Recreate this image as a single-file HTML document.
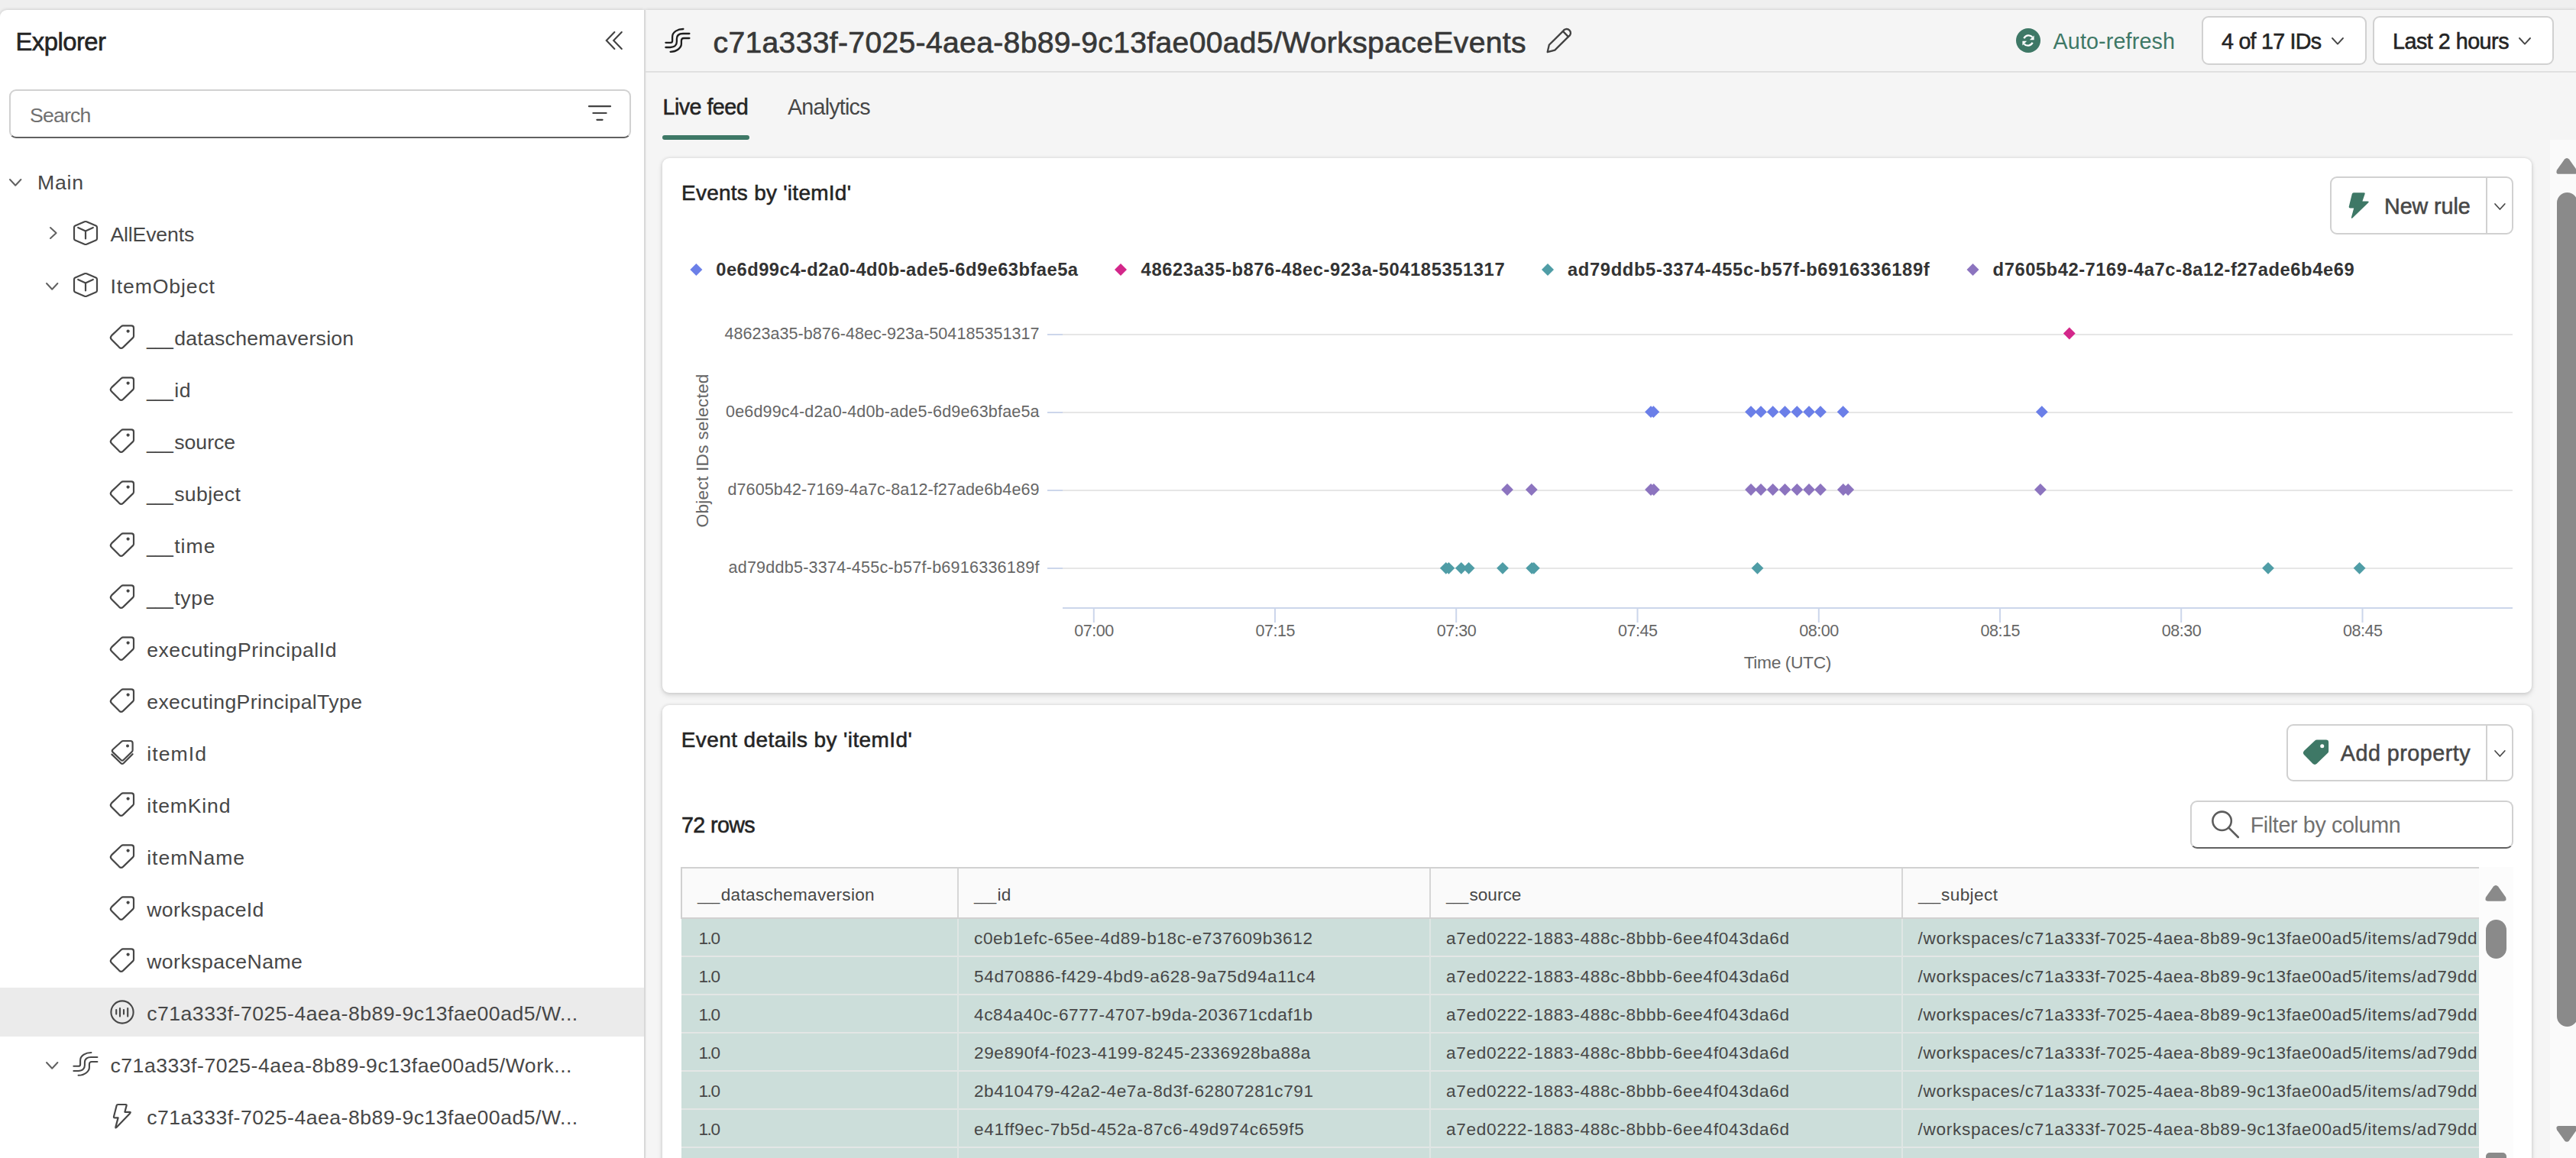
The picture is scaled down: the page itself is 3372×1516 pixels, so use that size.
<!DOCTYPE html>
<html lang="en"><head><meta charset="utf-8"><title>WorkspaceEvents - Live feed</title>
<style>
html,body{margin:0;padding:0}
body{width:3372px;height:1516px;overflow:hidden;position:relative;background:#efefef;font-family:"Liberation Sans",sans-serif;color:#424242}
div,span,svg{box-sizing:border-box}
.t{position:absolute;white-space:nowrap;line-height:0}
.t::before{content:"";display:inline-block;width:0;height:100px}
.p{display:inline-block;transform-origin:0 50%;letter-spacing:0}
.i{position:absolute;overflow:visible}
.abs{position:absolute}
#side{left:0;top:13px;width:843px;height:1503px;background:#fff;border-top-left-radius:9px;box-shadow:0 0 4px rgba(0,0,0,.2)}
#sideb{left:843px;top:13px;width:2px;height:1503px;background:#d9d9d9}
#main{left:845px;top:13px;width:2527px;height:1503px;background:#f5f5f5;box-shadow:0 0 4px rgba(0,0,0,.2)}
#hdrline{left:845px;top:93px;width:2527px;height:2px;background:#e0e0e0}
.card{background:#fff;border-radius:9px;box-shadow:0 0 4px rgba(0,0,0,.12),0 3px 7px rgba(0,0,0,.13)}
.btn{background:#fff;border:2px solid #d1d1d1;border-radius:9px}
.inp{background:#fff;border:2px solid #d1d1d1;border-bottom-color:#616161;border-radius:9px}
.sel{left:0;top:1293px;width:843px;height:64px;background:#ebebeb}
.row{left:892px;width:2353px;height:48px;background:#ccdeda}
.cd{width:2px;background:#dfe6e4;top:1203px;height:313px}
</style></head><body>
<div id="main" class="abs"></div><div id="side" class="abs"></div><div id="sideb" class="abs"></div>
<div class="t" style="top:-34.0px;font-size:32.81px;color:#242424;letter-spacing:-0.504px;-webkit-text-stroke:0.6px #242424;left:20.4px;">Explorer</div>
<svg class="i" style="left:790.0px;top:38.0px" width="28.0" height="30.0" viewBox="0 0 28.0 30.0" ><path d="M14.4 4 3.8 15 14.4 26M23.8 4 13.2 15 23.8 26" fill="none" stroke="#424242" stroke-width="2.1" stroke-linecap="round" stroke-linejoin="miter"/></svg>
<div class="abs inp" style="left:12px;top:117px;width:814px;height:64px"></div>
<div class="t" style="top:59.6px;font-size:26.63px;color:#707070;letter-spacing:-0.815px;left:39.0px;">Search</div>
<svg class="i" style="left:768.0px;top:136.0px" width="34.0" height="24.0" viewBox="0 0 34.0 24.0" ><path d="M3 3.2H31M8.4 12H25.6M13.4 20.8H20.6" fill="none" stroke="#424242" stroke-width="2.2" stroke-linecap="round"/></svg>
<div class="abs sel"></div>
<svg class="i" style="left:10.8px;top:232.6px" width="18.4" height="11.8" viewBox="0 0 18.4 11.8" ><polyline points="2,2 9.2,9.8 16.4,2" fill="none" stroke="#616161" stroke-width="2.0" stroke-linecap="round" stroke-linejoin="round"/></svg>
<div class="t" style="top:148.0px;font-size:26.63px;color:#474747;letter-spacing:0.760px;left:49.0px;">Main</div>
<svg class="i" style="left:63.5px;top:296.2px" width="11.6" height="18.0" viewBox="0 0 11.6 18.0" ><polyline points="2,2 9.6,9.0 2,16.0" fill="none" stroke="#616161" stroke-width="2.0" stroke-linecap="round" stroke-linejoin="round"/></svg>
<svg class="i" style="left:94.0px;top:287.0px" width="36.0" height="36.0" viewBox="0 0 36.0 36.0" ><g fill="none" stroke="#474747" stroke-width="2.2" stroke-linejoin="round" stroke-linecap="round"><path d="M16.6 3.3 4.4 8.6Q3 9.3 3 10.8V25.2Q3 26.7 4.4 27.4L16.6 32.7Q18 33.3 19.4 32.7L31.6 27.4Q33 26.7 33 25.2V10.8Q33 9.3 31.6 8.6L19.4 3.3Q18 2.7 16.6 3.3Z"/><path d="M8.2 11 18 15.6 27.8 11M18 15.6V25.4"/></g></svg>
<div class="t" style="top:216.0px;font-size:26.63px;color:#474747;letter-spacing:-0.162px;left:144.5px;">AllEvents</div>
<svg class="i" style="left:58.8px;top:368.6px" width="18.4" height="11.8" viewBox="0 0 18.4 11.8" ><polyline points="2,2 9.2,9.8 16.4,2" fill="none" stroke="#616161" stroke-width="2.0" stroke-linecap="round" stroke-linejoin="round"/></svg>
<svg class="i" style="left:94.0px;top:355.0px" width="36.0" height="36.0" viewBox="0 0 36.0 36.0" ><g fill="none" stroke="#474747" stroke-width="2.2" stroke-linejoin="round" stroke-linecap="round"><path d="M16.6 3.3 4.4 8.6Q3 9.3 3 10.8V25.2Q3 26.7 4.4 27.4L16.6 32.7Q18 33.3 19.4 32.7L31.6 27.4Q33 26.7 33 25.2V10.8Q33 9.3 31.6 8.6L19.4 3.3Q18 2.7 16.6 3.3Z"/><path d="M8.2 11 18 15.6 27.8 11M18 15.6V25.4"/></g></svg>
<div class="t" style="top:284.0px;font-size:26.63px;color:#474747;letter-spacing:0.863px;left:144.5px;">ItemObject</div>
<svg class="i" style="left:142.3px;top:422.6px" width="36.0" height="36.0" viewBox="0 0 36.0 36.0" ><g transform="translate(18 18) scale(1.0)"><path d="M1 -14.6H12Q15 -14.6 15 -11.6V-1Q15 0.2 14.1 1.1L1.2 13.6Q-1.4 16 -4 13.6L-14 3.4Q-16.4 0.9 -14 -1.6L-1.2 -13.7Q-0.2 -14.6 1 -14.6Z" fill="none" stroke="#474747" stroke-width="2.20" stroke-linejoin="round"/><circle cx="7.6" cy="-7.4" r="2.1" fill="#474747"/></g></svg>
<div class="t" style="top:352.0px;font-size:26.63px;color:#474747;letter-spacing:0.257px;left:192.2px;"><span class="p" style="width:36.0px;transform:scaleX(0.783)">___</span>dataschemaversion</div>
<svg class="i" style="left:142.3px;top:490.6px" width="36.0" height="36.0" viewBox="0 0 36.0 36.0" ><g transform="translate(18 18) scale(1.0)"><path d="M1 -14.6H12Q15 -14.6 15 -11.6V-1Q15 0.2 14.1 1.1L1.2 13.6Q-1.4 16 -4 13.6L-14 3.4Q-16.4 0.9 -14 -1.6L-1.2 -13.7Q-0.2 -14.6 1 -14.6Z" fill="none" stroke="#474747" stroke-width="2.20" stroke-linejoin="round"/><circle cx="7.6" cy="-7.4" r="2.1" fill="#474747"/></g></svg>
<div class="t" style="top:420.0px;font-size:26.63px;color:#474747;letter-spacing:0.766px;left:192.2px;"><span class="p" style="width:36.0px;transform:scaleX(0.783)">___</span>id</div>
<svg class="i" style="left:142.3px;top:558.6px" width="36.0" height="36.0" viewBox="0 0 36.0 36.0" ><g transform="translate(18 18) scale(1.0)"><path d="M1 -14.6H12Q15 -14.6 15 -11.6V-1Q15 0.2 14.1 1.1L1.2 13.6Q-1.4 16 -4 13.6L-14 3.4Q-16.4 0.9 -14 -1.6L-1.2 -13.7Q-0.2 -14.6 1 -14.6Z" fill="none" stroke="#474747" stroke-width="2.20" stroke-linejoin="round"/><circle cx="7.6" cy="-7.4" r="2.1" fill="#474747"/></g></svg>
<div class="t" style="top:488.0px;font-size:26.63px;color:#474747;letter-spacing:0.016px;left:192.2px;"><span class="p" style="width:36.0px;transform:scaleX(0.783)">___</span>source</div>
<svg class="i" style="left:142.3px;top:626.6px" width="36.0" height="36.0" viewBox="0 0 36.0 36.0" ><g transform="translate(18 18) scale(1.0)"><path d="M1 -14.6H12Q15 -14.6 15 -11.6V-1Q15 0.2 14.1 1.1L1.2 13.6Q-1.4 16 -4 13.6L-14 3.4Q-16.4 0.9 -14 -1.6L-1.2 -13.7Q-0.2 -14.6 1 -14.6Z" fill="none" stroke="#474747" stroke-width="2.20" stroke-linejoin="round"/><circle cx="7.6" cy="-7.4" r="2.1" fill="#474747"/></g></svg>
<div class="t" style="top:556.0px;font-size:26.63px;color:#474747;letter-spacing:0.371px;left:192.2px;"><span class="p" style="width:36.0px;transform:scaleX(0.783)">___</span>subject</div>
<svg class="i" style="left:142.3px;top:694.6px" width="36.0" height="36.0" viewBox="0 0 36.0 36.0" ><g transform="translate(18 18) scale(1.0)"><path d="M1 -14.6H12Q15 -14.6 15 -11.6V-1Q15 0.2 14.1 1.1L1.2 13.6Q-1.4 16 -4 13.6L-14 3.4Q-16.4 0.9 -14 -1.6L-1.2 -13.7Q-0.2 -14.6 1 -14.6Z" fill="none" stroke="#474747" stroke-width="2.20" stroke-linejoin="round"/><circle cx="7.6" cy="-7.4" r="2.1" fill="#474747"/></g></svg>
<div class="t" style="top:624.0px;font-size:26.63px;color:#474747;letter-spacing:1.029px;left:192.2px;"><span class="p" style="width:36.0px;transform:scaleX(0.783)">___</span>time</div>
<svg class="i" style="left:142.3px;top:762.6px" width="36.0" height="36.0" viewBox="0 0 36.0 36.0" ><g transform="translate(18 18) scale(1.0)"><path d="M1 -14.6H12Q15 -14.6 15 -11.6V-1Q15 0.2 14.1 1.1L1.2 13.6Q-1.4 16 -4 13.6L-14 3.4Q-16.4 0.9 -14 -1.6L-1.2 -13.7Q-0.2 -14.6 1 -14.6Z" fill="none" stroke="#474747" stroke-width="2.20" stroke-linejoin="round"/><circle cx="7.6" cy="-7.4" r="2.1" fill="#474747"/></g></svg>
<div class="t" style="top:692.0px;font-size:26.63px;color:#474747;letter-spacing:0.724px;left:192.2px;"><span class="p" style="width:36.0px;transform:scaleX(0.783)">___</span>type</div>
<svg class="i" style="left:142.3px;top:830.6px" width="36.0" height="36.0" viewBox="0 0 36.0 36.0" ><g transform="translate(18 18) scale(1.0)"><path d="M1 -14.6H12Q15 -14.6 15 -11.6V-1Q15 0.2 14.1 1.1L1.2 13.6Q-1.4 16 -4 13.6L-14 3.4Q-16.4 0.9 -14 -1.6L-1.2 -13.7Q-0.2 -14.6 1 -14.6Z" fill="none" stroke="#474747" stroke-width="2.20" stroke-linejoin="round"/><circle cx="7.6" cy="-7.4" r="2.1" fill="#474747"/></g></svg>
<div class="t" style="top:760.0px;font-size:26.63px;color:#474747;letter-spacing:0.526px;left:192.2px;">executingPrincipalId</div>
<svg class="i" style="left:142.3px;top:898.6px" width="36.0" height="36.0" viewBox="0 0 36.0 36.0" ><g transform="translate(18 18) scale(1.0)"><path d="M1 -14.6H12Q15 -14.6 15 -11.6V-1Q15 0.2 14.1 1.1L1.2 13.6Q-1.4 16 -4 13.6L-14 3.4Q-16.4 0.9 -14 -1.6L-1.2 -13.7Q-0.2 -14.6 1 -14.6Z" fill="none" stroke="#474747" stroke-width="2.20" stroke-linejoin="round"/><circle cx="7.6" cy="-7.4" r="2.1" fill="#474747"/></g></svg>
<div class="t" style="top:828.0px;font-size:26.63px;color:#474747;letter-spacing:0.380px;left:192.2px;">executingPrincipalType</div>
<svg class="i" style="left:142.3px;top:967.0px" width="36.0" height="38.0" viewBox="0 0 36.0 38.0" ><g transform="translate(18 16)"><path d="M1.2 -13H10.8Q13.6 -13 13.6 -10.2V-1Q13.6 0.2 12.8 1L1.8 11.8Q0 13.6 -1.8 11.8L-12.4 1.6Q-14 0 -12.4 -1.8L-0.8 -12.2Q0 -13 1.2 -13Z" fill="none" stroke="#474747" stroke-width="2.2" stroke-linejoin="round"/><path d="M-13.6 4.6 -1.9 16Q0 17.8 1.9 16L13.6 4.2" fill="none" stroke="#474747" stroke-width="2.2" stroke-linecap="round"/><circle cx="7" cy="-6.4" r="2" fill="#474747"/></g></svg>
<div class="t" style="top:896.0px;font-size:26.63px;color:#474747;letter-spacing:1.097px;left:192.2px;">itemId</div>
<svg class="i" style="left:142.3px;top:1034.6px" width="36.0" height="36.0" viewBox="0 0 36.0 36.0" ><g transform="translate(18 18) scale(1.0)"><path d="M1 -14.6H12Q15 -14.6 15 -11.6V-1Q15 0.2 14.1 1.1L1.2 13.6Q-1.4 16 -4 13.6L-14 3.4Q-16.4 0.9 -14 -1.6L-1.2 -13.7Q-0.2 -14.6 1 -14.6Z" fill="none" stroke="#474747" stroke-width="2.20" stroke-linejoin="round"/><circle cx="7.6" cy="-7.4" r="2.1" fill="#474747"/></g></svg>
<div class="t" style="top:964.0px;font-size:26.63px;color:#474747;letter-spacing:0.815px;left:192.2px;">itemKind</div>
<svg class="i" style="left:142.3px;top:1102.6px" width="36.0" height="36.0" viewBox="0 0 36.0 36.0" ><g transform="translate(18 18) scale(1.0)"><path d="M1 -14.6H12Q15 -14.6 15 -11.6V-1Q15 0.2 14.1 1.1L1.2 13.6Q-1.4 16 -4 13.6L-14 3.4Q-16.4 0.9 -14 -1.6L-1.2 -13.7Q-0.2 -14.6 1 -14.6Z" fill="none" stroke="#474747" stroke-width="2.20" stroke-linejoin="round"/><circle cx="7.6" cy="-7.4" r="2.1" fill="#474747"/></g></svg>
<div class="t" style="top:1032.0px;font-size:26.63px;color:#474747;letter-spacing:0.953px;left:192.2px;">itemName</div>
<svg class="i" style="left:142.3px;top:1170.6px" width="36.0" height="36.0" viewBox="0 0 36.0 36.0" ><g transform="translate(18 18) scale(1.0)"><path d="M1 -14.6H12Q15 -14.6 15 -11.6V-1Q15 0.2 14.1 1.1L1.2 13.6Q-1.4 16 -4 13.6L-14 3.4Q-16.4 0.9 -14 -1.6L-1.2 -13.7Q-0.2 -14.6 1 -14.6Z" fill="none" stroke="#474747" stroke-width="2.20" stroke-linejoin="round"/><circle cx="7.6" cy="-7.4" r="2.1" fill="#474747"/></g></svg>
<div class="t" style="top:1100.0px;font-size:26.63px;color:#474747;letter-spacing:0.373px;left:192.2px;">workspaceId</div>
<svg class="i" style="left:142.3px;top:1238.6px" width="36.0" height="36.0" viewBox="0 0 36.0 36.0" ><g transform="translate(18 18) scale(1.0)"><path d="M1 -14.6H12Q15 -14.6 15 -11.6V-1Q15 0.2 14.1 1.1L1.2 13.6Q-1.4 16 -4 13.6L-14 3.4Q-16.4 0.9 -14 -1.6L-1.2 -13.7Q-0.2 -14.6 1 -14.6Z" fill="none" stroke="#474747" stroke-width="2.20" stroke-linejoin="round"/><circle cx="7.6" cy="-7.4" r="2.1" fill="#474747"/></g></svg>
<div class="t" style="top:1168.0px;font-size:26.63px;color:#474747;letter-spacing:0.450px;left:192.2px;">workspaceName</div>
<svg class="i" style="left:142.0px;top:1306.7px" width="36.0" height="36.0" viewBox="0 0 36.0 36.0" ><g transform="translate(18 18)" fill="none" stroke="#474747" stroke-width="2.1" stroke-linecap="round"><circle r="14.6"/><path d="M-7.8 -3V2.6M-3 -5V5.6M2 -3V2.6M7.2 -5V5.6"/></g></svg>
<div class="t" style="top:1236.0px;font-size:26.63px;color:#474747;letter-spacing:0.481px;left:192.2px;">c71a333f-7025-4aea-8b89-9c13fae00ad5/W...</div>
<svg class="i" style="left:58.8px;top:1388.6px" width="18.4" height="11.8" viewBox="0 0 18.4 11.8" ><polyline points="2,2 9.2,9.8 16.4,2" fill="none" stroke="#616161" stroke-width="2.0" stroke-linecap="round" stroke-linejoin="round"/></svg>
<svg class="i" style="left:94.0px;top:1375.0px" width="36.0" height="36.0" viewBox="0 0 36.0 36.0" ><g transform="translate(18 18)" fill="none" stroke="#474747" stroke-width="2.1" stroke-linecap="round"><path d="M-15.6 2.8H-9.3Q-6.9 2.8 -6.9 0.4V-4.6C-6.9 -11.4 0.4 -15 7.4 -15"/><path d="M-15.6 9H-9.6C-3.2 9 -1.1 5 -1.1 1.6V-2.2C-1.1 -7 2.6 -9 7 -9H15.4"/><path d="M-9.4 14.8C-1 14.8 4.9 9.4 4.9 4.6V0.6C4.9 -2 6 -3 8 -3H15.4"/></g></svg>
<div class="t" style="top:1304.0px;font-size:26.63px;color:#474747;letter-spacing:0.495px;left:144.5px;">c71a333f-7025-4aea-8b89-9c13fae00ad5/Work...</div>
<svg class="i" style="left:142.3px;top:1443.0px" width="36.0" height="36.0" viewBox="0 0 36.0 36.0" ><g transform="translate(18 18)"><path d="M-5.6 -15H4.6Q6 -15 5.6 -13.6L3.4 -5.2H9.6Q11.6 -5.2 10.2 -3.6L-7.6 15Q-9 16.2 -8.6 14.4L-5.4 2.4H-9.6Q-11.4 2.4 -11 0.8L-7.4 -13.6Q-7 -15 -5.6 -15Z" fill="none" stroke="#474747" stroke-width="2.2" stroke-linejoin="round"/></g></svg>
<div class="t" style="top:1372.0px;font-size:26.63px;color:#474747;letter-spacing:0.481px;left:192.2px;">c71a333f-7025-4aea-8b89-9c13fae00ad5/W...</div>
<div id="hdrline" class="abs"></div>
<svg class="i" style="left:869.0px;top:35.0px" width="36.0" height="36.0" viewBox="0 0 36.0 36.0" ><g transform="translate(18 18)" fill="none" stroke="#1f1f1f" stroke-width="2.3" stroke-linecap="round"><path d="M-15.6 2.8H-9.3Q-6.9 2.8 -6.9 0.4V-4.6C-6.9 -11.4 0.4 -15 7.4 -15"/><path d="M-15.6 9H-9.6C-3.2 9 -1.1 5 -1.1 1.6V-2.2C-1.1 -7 2.6 -9 7 -9H15.4"/><path d="M-9.4 14.8C-1 14.8 4.9 9.4 4.9 4.6V0.6C4.9 -2 6 -3 8 -3H15.4"/></g></svg>
<div class="t" style="top:-31.0px;font-size:39.08px;color:#383838;-webkit-text-stroke:0.7px #383838;left:933.5px;"><span style="letter-spacing:0.336px">c71a333f-7025-4aea-8b89-9c13fae00ad5</span><span style="letter-spacing:0.370px">/WorkspaceEvents</span></div>
<svg class="i" style="left:2022.0px;top:33.0px" width="40.0" height="40.0" viewBox="0 0 40.0 40.0" ><g fill="none" stroke="#424242" stroke-width="2.3" stroke-linejoin="round" stroke-linecap="round"><path d="M3.7 35.1 5.8 25.7 23.9 7.9A5.3 5.3 0 1 1 30.9 15.1L13.3 32.6Z"/><path d="M23.9 7.9 30.9 15.1"/></g></svg>
<svg class="i" style="left:2639.0px;top:37.0px" width="32.0" height="32.0" viewBox="0 0 32.0 32.0" ><circle cx="16" cy="16" r="16" fill="#3e7866"/><g fill="none" stroke="#fff" stroke-width="2.3" stroke-linecap="butt"><path d="M10.4 13.2A6.6 6.6 0 0 1 21.4 11.6"/><path d="M21.6 18.8A6.6 6.6 0 0 1 10.6 20.4"/></g><path d="M23.6 9.4v5.8h-5.8zM8.4 22.6v-5.8h5.8z" fill="#fff"/></svg>
<div class="t" style="top:-36.2px;font-size:28.71px;color:#3e7866;letter-spacing:0.142px;left:2687.5px;">Auto-refresh</div>
<div class="abs btn" style="left:2882px;top:21px;width:216px;height:64px"></div>
<div class="t" style="top:-36.2px;font-size:28.71px;color:#242424;letter-spacing:-0.781px;-webkit-text-stroke:0.55px #242424;left:2908.0px;">4 of 17 IDs</div>
<svg class="i" style="left:3050.8px;top:47.8px" width="18.0" height="11.6" viewBox="0 0 18.0 11.6" ><polyline points="2,2 9.0,9.6 16.0,2" fill="none" stroke="#474747" stroke-width="1.9" stroke-linecap="round" stroke-linejoin="round"/></svg>
<div class="abs btn" style="left:3106px;top:21px;width:237px;height:64px"></div>
<div class="t" style="top:-36.2px;font-size:28.71px;color:#242424;letter-spacing:-0.497px;-webkit-text-stroke:0.55px #242424;left:3132.0px;">Last 2 hours</div>
<svg class="i" style="left:3296.4px;top:47.8px" width="18.0" height="11.6" viewBox="0 0 18.0 11.6" ><polyline points="2,2 9.0,9.6 16.0,2" fill="none" stroke="#474747" stroke-width="1.9" stroke-linecap="round" stroke-linejoin="round"/></svg>
<div class="t" style="top:50.0px;font-size:28.71px;color:#242424;letter-spacing:-0.562px;-webkit-text-stroke:0.55px #242424;left:867.6px;">Live feed</div>
<div class="t" style="top:50.0px;font-size:28.71px;color:#474747;letter-spacing:-0.795px;left:1031.0px;">Analytics</div>
<div class="abs" style="left:867px;top:177px;width:114px;height:6px;border-radius:3px;background:#3e7866"></div>
<div class="abs card" style="left:867px;top:207px;width:2447px;height:700px"></div>
<div class="t" style="top:161.7px;font-size:27.98px;color:#242424;letter-spacing:0.268px;-webkit-text-stroke:0.55px #242424;left:892.0px;">Events by 'itemId'</div>
<div class="abs btn" style="left:3050px;top:231px;width:240px;height:76px"></div>
<div class="abs" style="left:3254px;top:233px;width:2px;height:72px;background:#d1d1d1"></div>
<svg class="i" style="left:3070.0px;top:248.0px" width="36.0" height="42.0" viewBox="0 0 36.0 42.0" ><path d="M11 4.2H24.4Q26.2 4.2 25.6 6L22.4 15.6H29.2Q31.8 15.6 30 17.6L9.6 37.2Q7.4 38.8 8 36.2L11.2 24.4H6.4Q4.2 24.4 4.8 22.2L8.8 6Q9.2 4.2 11 4.2Z" fill="#3e7866"/></svg>
<div class="t" style="top:179.5px;font-size:28.71px;color:#474747;letter-spacing:-0.081px;-webkit-text-stroke:0.55px #474747;left:3121.0px;">New rule</div>
<svg class="i" style="left:3263.6px;top:265.2px" width="16.8" height="11.0" viewBox="0 0 16.8 11.0" ><polyline points="2,2 8.4,9.0 14.8,2" fill="none" stroke="#474747" stroke-width="1.7" stroke-linecap="round" stroke-linejoin="round"/></svg>
<svg class="i" style="left:0;top:0" width="3372" height="1516" viewBox="0 0 3372 1516"><path d="M911.4 345.0L919.4 353.0L911.4 361.0L903.4 353.0Z" fill="#6b7fe8"/><path d="M1467.0 345.0L1475.0 353.0L1467.0 361.0L1459.0 353.0Z" fill="#d3278a"/><path d="M2026.0 345.0L2034.0 353.0L2026.0 361.0L2018.0 353.0Z" fill="#4f9da6"/><path d="M2582.5 345.0L2590.5 353.0L2582.5 361.0L2574.5 353.0Z" fill="#8c74bf"/><rect x="1391" y="437" width="1898" height="2" fill="#e6e6e6"/><rect x="1371" y="437" width="20" height="2" fill="#ccd6eb"/><rect x="1391" y="539" width="1898" height="2" fill="#e6e6e6"/><rect x="1371" y="539" width="20" height="2" fill="#ccd6eb"/><rect x="1391" y="641" width="1898" height="2" fill="#e6e6e6"/><rect x="1371" y="641" width="20" height="2" fill="#ccd6eb"/><rect x="1391" y="743" width="1898" height="2" fill="#e6e6e6"/><rect x="1371" y="743" width="20" height="2" fill="#ccd6eb"/><rect x="1391" y="795" width="1898" height="2" fill="#ccd6eb"/><rect x="1430.8" y="797" width="2" height="18" fill="#ccd6eb"/><rect x="1668.0" y="797" width="2" height="18" fill="#ccd6eb"/><rect x="1905.2" y="797" width="2" height="18" fill="#ccd6eb"/><rect x="2142.5" y="797" width="2" height="18" fill="#ccd6eb"/><rect x="2379.8" y="797" width="2" height="18" fill="#ccd6eb"/><rect x="2617.0" y="797" width="2" height="18" fill="#ccd6eb"/><rect x="2854.2" y="797" width="2" height="18" fill="#ccd6eb"/><rect x="3091.5" y="797" width="2" height="18" fill="#ccd6eb"/><path d="M2708.8 428.6L2716.7 436.5L2708.8 444.4L2700.9 436.5Z" fill="#d3278a"/><path d="M2161.0 531.3L2168.9 539.2L2161.0 547.1L2153.1 539.2Z" fill="#6b7fe8"/><path d="M2164.4 531.3L2172.3 539.2L2164.4 547.1L2156.5 539.2Z" fill="#6b7fe8"/><path d="M2292.0 531.3L2299.9 539.2L2292.0 547.1L2284.1 539.2Z" fill="#6b7fe8"/><path d="M2305.0 531.3L2312.9 539.2L2305.0 547.1L2297.1 539.2Z" fill="#6b7fe8"/><path d="M2320.7 531.3L2328.6 539.2L2320.7 547.1L2312.8 539.2Z" fill="#6b7fe8"/><path d="M2336.5 531.3L2344.4 539.2L2336.5 547.1L2328.6 539.2Z" fill="#6b7fe8"/><path d="M2352.3 531.3L2360.2 539.2L2352.3 547.1L2344.4 539.2Z" fill="#6b7fe8"/><path d="M2368.0 531.3L2375.9 539.2L2368.0 547.1L2360.1 539.2Z" fill="#6b7fe8"/><path d="M2383.0 531.3L2390.9 539.2L2383.0 547.1L2375.1 539.2Z" fill="#6b7fe8"/><path d="M2412.6 531.3L2420.5 539.2L2412.6 547.1L2404.7 539.2Z" fill="#6b7fe8"/><path d="M2672.8 531.3L2680.7 539.2L2672.8 547.1L2664.9 539.2Z" fill="#6b7fe8"/><path d="M1973.0 633.1L1980.9 641.0L1973.0 648.9L1965.1 641.0Z" fill="#8c74bf"/><path d="M2004.8 633.1L2012.7 641.0L2004.8 648.9L1996.9 641.0Z" fill="#8c74bf"/><path d="M2161.0 633.1L2168.9 641.0L2161.0 648.9L2153.1 641.0Z" fill="#8c74bf"/><path d="M2164.8 633.1L2172.7 641.0L2164.8 648.9L2156.9 641.0Z" fill="#8c74bf"/><path d="M2292.0 633.1L2299.9 641.0L2292.0 648.9L2284.1 641.0Z" fill="#8c74bf"/><path d="M2305.0 633.1L2312.9 641.0L2305.0 648.9L2297.1 641.0Z" fill="#8c74bf"/><path d="M2320.7 633.1L2328.6 641.0L2320.7 648.9L2312.8 641.0Z" fill="#8c74bf"/><path d="M2336.5 633.1L2344.4 641.0L2336.5 648.9L2328.6 641.0Z" fill="#8c74bf"/><path d="M2352.3 633.1L2360.2 641.0L2352.3 648.9L2344.4 641.0Z" fill="#8c74bf"/><path d="M2368.0 633.1L2375.9 641.0L2368.0 648.9L2360.1 641.0Z" fill="#8c74bf"/><path d="M2383.0 633.1L2390.9 641.0L2383.0 648.9L2375.1 641.0Z" fill="#8c74bf"/><path d="M2412.8 633.1L2420.7 641.0L2412.8 648.9L2404.9 641.0Z" fill="#8c74bf"/><path d="M2419.2 633.1L2427.1 641.0L2419.2 648.9L2411.3 641.0Z" fill="#8c74bf"/><path d="M2670.9 633.1L2678.8 641.0L2670.9 648.9L2663.0 641.0Z" fill="#8c74bf"/><path d="M1892.8 735.9L1900.7 743.8L1892.8 751.7L1884.9 743.8Z" fill="#4f9da6"/><path d="M1896.4 735.9L1904.3 743.8L1896.4 751.7L1888.5 743.8Z" fill="#4f9da6"/><path d="M1912.8 735.9L1920.7 743.8L1912.8 751.7L1904.9 743.8Z" fill="#4f9da6"/><path d="M1922.6 735.9L1930.5 743.8L1922.6 751.7L1914.7 743.8Z" fill="#4f9da6"/><path d="M1967.0 735.9L1974.9 743.8L1967.0 751.7L1959.1 743.8Z" fill="#4f9da6"/><path d="M2005.2 735.9L2013.1 743.8L2005.2 751.7L1997.3 743.8Z" fill="#4f9da6"/><path d="M2007.8 735.9L2015.7 743.8L2007.8 751.7L1999.9 743.8Z" fill="#4f9da6"/><path d="M2300.5 735.9L2308.4 743.8L2300.5 751.7L2292.6 743.8Z" fill="#4f9da6"/><path d="M2969.0 735.9L2976.9 743.8L2969.0 751.7L2961.1 743.8Z" fill="#4f9da6"/><path d="M3088.6 735.9L3096.5 743.8L3088.6 751.7L3080.7 743.8Z" fill="#4f9da6"/></svg>
<div class="t" style="top:260.6px;font-size:23.74px;color:#333;font-weight:700;letter-spacing:0.454px;left:937.3px;">0e6d99c4-d2a0-4d0b-ade5-6d9e63bfae5a</div>
<div class="t" style="top:260.6px;font-size:23.74px;color:#333;font-weight:700;letter-spacing:0.591px;left:1493.6px;">48623a35-b876-48ec-923a-504185351317</div>
<div class="t" style="top:260.6px;font-size:23.74px;color:#333;font-weight:700;letter-spacing:0.642px;left:2052.0px;">ad79ddb5-3374-455c-b57f-b6916336189f</div>
<div class="t" style="top:260.6px;font-size:23.74px;color:#333;font-weight:700;letter-spacing:0.545px;left:2608.6px;">d7605b42-7169-4a7c-8a12-f27ade6b4e69</div>
<div class="t" style="top:343.8px;font-size:21.52px;color:#666;letter-spacing:0.046px;right:2011.5px;">48623a35-b876-48ec-923a-504185351317</div>
<div class="t" style="top:445.8px;font-size:21.52px;color:#666;letter-spacing:0.175px;right:2011.3px;">0e6d99c4-d2a0-4d0b-ade5-6d9e63bfae5a</div>
<div class="t" style="top:547.8px;font-size:21.52px;color:#666;letter-spacing:0.104px;right:2011.4px;">d7605b42-7169-4a7c-8a12-f27ade6b4e69</div>
<div class="t" style="top:649.8px;font-size:21.52px;color:#666;letter-spacing:0.246px;right:2011.3px;">ad79ddb5-3374-455c-b57f-b6916336189f</div>
<div class="t" style="top:733.1px;font-size:21.52px;color:#666;letter-spacing:-0.461px;left:1432.0px;transform:translateX(-50%);">07:00</div>
<div class="t" style="top:733.1px;font-size:21.52px;color:#666;letter-spacing:-0.461px;left:1669.3px;transform:translateX(-50%);">07:15</div>
<div class="t" style="top:733.1px;font-size:21.52px;color:#666;letter-spacing:-0.461px;left:1906.5px;transform:translateX(-50%);">07:30</div>
<div class="t" style="top:733.1px;font-size:21.52px;color:#666;letter-spacing:-0.461px;left:2143.8px;transform:translateX(-50%);">07:45</div>
<div class="t" style="top:733.1px;font-size:21.52px;color:#666;letter-spacing:-0.461px;left:2381.0px;transform:translateX(-50%);">08:00</div>
<div class="t" style="top:733.1px;font-size:21.52px;color:#666;letter-spacing:-0.461px;left:2618.3px;transform:translateX(-50%);">08:15</div>
<div class="t" style="top:733.1px;font-size:21.52px;color:#666;letter-spacing:-0.461px;left:2855.5px;transform:translateX(-50%);">08:30</div>
<div class="t" style="top:733.1px;font-size:21.52px;color:#666;letter-spacing:-0.461px;left:3092.8px;transform:translateX(-50%);">08:45</div>
<div class="t" style="top:775.3px;font-size:22.77px;color:#666;letter-spacing:-0.381px;left:2339.8px;transform:translateX(-50%);">Time (UTC)</div>
<div class="abs" style="left:918.7px;top:590px;width:0;height:0;transform:rotate(-90deg)">
<div class="t" style="top:-91.7px;font-size:22.77px;color:#666;letter-spacing:0.201px;left:0.1px;transform:translateX(-50%);">Object IDs selected</div>
</div>
<div class="abs card" style="left:867px;top:923px;width:2447px;height:640px"></div>
<div class="t" style="top:878.0px;font-size:27.98px;color:#242424;letter-spacing:0.414px;-webkit-text-stroke:0.55px #242424;left:891.8px;">Event details by 'itemId'</div>
<div class="abs btn" style="left:2993px;top:947.5px;width:297px;height:75px"></div>
<div class="abs" style="left:3254px;top:950px;width:2px;height:71px;background:#d1d1d1"></div>
<svg class="i" style="left:3012.0px;top:965.0px" width="40.0" height="40.0" viewBox="0 0 40.0 40.0" ><g transform="translate(19.6 19.6) scale(1.1)"><path d="M1 -14.6H12Q15 -14.6 15 -11.6V-1Q15 0.2 14.1 1.1L1.2 13.6Q-1.4 16 -4 13.6L-14 3.4Q-16.4 0.9 -14 -1.6L-1.2 -13.7Q-0.2 -14.6 1 -14.6Z" fill="#3e7866"/><circle cx="7.4" cy="-7.2" r="2.3" fill="#fff"/></g></svg>
<div class="t" style="top:896.0px;font-size:28.71px;color:#474747;letter-spacing:0.487px;-webkit-text-stroke:0.55px #474747;left:3063.8px;">Add property</div>
<svg class="i" style="left:3263.6px;top:981.1px" width="16.8" height="11.0" viewBox="0 0 16.8 11.0" ><polyline points="2,2 8.4,9.0 14.8,2" fill="none" stroke="#474747" stroke-width="1.7" stroke-linecap="round" stroke-linejoin="round"/></svg>
<div class="t" style="top:989.8px;font-size:28.71px;color:#242424;letter-spacing:-0.636px;-webkit-text-stroke:0.55px #242424;left:892.0px;">72 rows</div>
<div class="abs inp" style="left:2867px;top:1047.5px;width:423px;height:63.5px"></div>
<svg class="i" style="left:2892.0px;top:1058.0px" width="44.0" height="44.0" viewBox="0 0 44.0 44.0" ><g fill="none" stroke="#5c5c5c" stroke-width="2.6" stroke-linecap="round"><circle cx="16.6" cy="16.8" r="12.2"/><path d="M25.4 25.6 37.8 38"/></g></svg>
<div class="t" style="top:990.4px;font-size:28.71px;color:#707070;letter-spacing:-0.372px;left:2945.7px;">Filter by column</div>
<div class="abs" style="left:891px;top:1135px;width:2354px;height:68px;background:#d1d1d1"></div>
<div class="abs" style="left:893px;top:1137px;width:2352px;height:64px;background:#fafafa"></div>
<div class="abs" style="left:892px;top:1203px;width:2353px;height:313px;background:#e3e6e5"></div>
<div class="abs row" style="top:1203px"></div>
<div class="abs row" style="top:1253px"></div>
<div class="abs row" style="top:1303px"></div>
<div class="abs row" style="top:1353px"></div>
<div class="abs row" style="top:1403px"></div>
<div class="abs row" style="top:1453px"></div>
<div class="abs row" style="top:1503px"></div>
<div class="abs" style="left:1253px;top:1137px;width:2px;height:64px;background:#d6d6d6"></div>
<div class="abs cd" style="left:1253px"></div>
<div class="abs" style="left:1871px;top:1137px;width:2px;height:64px;background:#d6d6d6"></div>
<div class="abs cd" style="left:1871px"></div>
<div class="abs" style="left:2489px;top:1137px;width:2px;height:64px;background:#d6d6d6"></div>
<div class="abs cd" style="left:2489px"></div>
<div class="abs" style="left:893px;top:1137px;width:2350px;height:379px;overflow:hidden">
<div class="t" style="top:-58.4px;font-size:22.58px;color:#474747;letter-spacing:0.325px;left:20.3px;"><span class="p" style="width:30.4px;transform:scaleX(0.775)">___</span>dataschemaversion</div>
<div class="t" style="top:-58.4px;font-size:22.58px;color:#474747;letter-spacing:0.422px;left:382.0px;"><span class="p" style="width:30.4px;transform:scaleX(0.775)">___</span>id</div>
<div class="t" style="top:-58.4px;font-size:22.58px;color:#474747;letter-spacing:0.044px;left:1000.0px;"><span class="p" style="width:30.4px;transform:scaleX(0.775)">___</span>source</div>
<div class="t" style="top:-58.4px;font-size:22.58px;color:#474747;letter-spacing:0.409px;left:1617.6px;"><span class="p" style="width:30.4px;transform:scaleX(0.775)">___</span>subject</div>
<div class="t" style="top:-1.0px;font-size:22.58px;color:#474747;letter-spacing:-1.395px;left:21.4px;">1.0</div>
<div class="t" style="top:-1.0px;font-size:22.58px;color:#474747;letter-spacing:0.605px;left:382.0px;">c0eb1efc-65ee-4d89-b18c-e737609b3612</div>
<div class="t" style="top:-1.0px;font-size:22.58px;color:#474747;letter-spacing:0.704px;left:1000.0px;">a7ed0222-1883-488c-8bbb-6ee4f043da6d</div>
<div class="t" style="top:-1.0px;font-size:22.58px;color:#474747;letter-spacing:0.693px;left:1617.6px;">/workspaces/c71a333f-7025-4aea-8b89-9c13fae00ad5/items/ad79ddb5-3374-455c-b57f-b6916336189f</div>
<div class="t" style="top:49.0px;font-size:22.58px;color:#474747;letter-spacing:-1.395px;left:21.4px;">1.0</div>
<div class="t" style="top:49.0px;font-size:22.58px;color:#474747;letter-spacing:0.687px;left:382.0px;">54d70886-f429-4bd9-a628-9a75d94a11c4</div>
<div class="t" style="top:49.0px;font-size:22.58px;color:#474747;letter-spacing:0.704px;left:1000.0px;">a7ed0222-1883-488c-8bbb-6ee4f043da6d</div>
<div class="t" style="top:49.0px;font-size:22.58px;color:#474747;letter-spacing:0.693px;left:1617.6px;">/workspaces/c71a333f-7025-4aea-8b89-9c13fae00ad5/items/ad79ddb5-3374-455c-b57f-b6916336189f</div>
<div class="t" style="top:99.0px;font-size:22.58px;color:#474747;letter-spacing:-1.395px;left:21.4px;">1.0</div>
<div class="t" style="top:99.0px;font-size:22.58px;color:#474747;letter-spacing:0.605px;left:382.0px;">4c84a40c-6777-4707-b9da-203671cdaf1b</div>
<div class="t" style="top:99.0px;font-size:22.58px;color:#474747;letter-spacing:0.704px;left:1000.0px;">a7ed0222-1883-488c-8bbb-6ee4f043da6d</div>
<div class="t" style="top:99.0px;font-size:22.58px;color:#474747;letter-spacing:0.693px;left:1617.6px;">/workspaces/c71a333f-7025-4aea-8b89-9c13fae00ad5/items/ad79ddb5-3374-455c-b57f-b6916336189f</div>
<div class="t" style="top:149.0px;font-size:22.58px;color:#474747;letter-spacing:-1.395px;left:21.4px;">1.0</div>
<div class="t" style="top:149.0px;font-size:22.58px;color:#474747;letter-spacing:0.599px;left:382.0px;">29e890f4-f023-4199-8245-2336928ba88a</div>
<div class="t" style="top:149.0px;font-size:22.58px;color:#474747;letter-spacing:0.704px;left:1000.0px;">a7ed0222-1883-488c-8bbb-6ee4f043da6d</div>
<div class="t" style="top:149.0px;font-size:22.58px;color:#474747;letter-spacing:0.693px;left:1617.6px;">/workspaces/c71a333f-7025-4aea-8b89-9c13fae00ad5/items/ad79ddb5-3374-455c-b57f-b6916336189f</div>
<div class="t" style="top:199.0px;font-size:22.58px;color:#474747;letter-spacing:-1.395px;left:21.4px;">1.0</div>
<div class="t" style="top:199.0px;font-size:22.58px;color:#474747;letter-spacing:0.562px;left:382.0px;">2b410479-42a2-4e7a-8d3f-62807281c791</div>
<div class="t" style="top:199.0px;font-size:22.58px;color:#474747;letter-spacing:0.704px;left:1000.0px;">a7ed0222-1883-488c-8bbb-6ee4f043da6d</div>
<div class="t" style="top:199.0px;font-size:22.58px;color:#474747;letter-spacing:0.693px;left:1617.6px;">/workspaces/c71a333f-7025-4aea-8b89-9c13fae00ad5/items/ad79ddb5-3374-455c-b57f-b6916336189f</div>
<div class="t" style="top:249.0px;font-size:22.58px;color:#474747;letter-spacing:-1.395px;left:21.4px;">1.0</div>
<div class="t" style="top:249.0px;font-size:22.58px;color:#474747;letter-spacing:0.656px;left:382.0px;">e41ff9ec-7b5d-452a-87c6-49d974c659f5</div>
<div class="t" style="top:249.0px;font-size:22.58px;color:#474747;letter-spacing:0.704px;left:1000.0px;">a7ed0222-1883-488c-8bbb-6ee4f043da6d</div>
<div class="t" style="top:249.0px;font-size:22.58px;color:#474747;letter-spacing:0.693px;left:1617.6px;">/workspaces/c71a333f-7025-4aea-8b89-9c13fae00ad5/items/ad79ddb5-3374-455c-b57f-b6916336189f</div>
</div>
<div class="abs" style="left:3245px;top:1135px;width:45px;height:381px;background:#fcfcfc"></div>
<svg class="i" style="left:3249.4px;top:1155.0px" width="36.0" height="28.0" viewBox="0 0 36.0 28.0" ><path d="M18 4Q19.8 4 21 5.6L31 19.6Q32.8 24.8 28.6 24.8H7.4Q3.2 24.8 5 19.6L15 5.6Q16.2 4 18 4Z" fill="#8a8a8a"/></svg>
<div class="abs" style="left:3254px;top:1204px;width:27px;height:51px;border-radius:13.5px;background:#8a8a8a"></div>
<div class="abs" style="left:3254px;top:1509px;width:27px;height:14px;border-radius:5px;background:#8a8a8a"></div>
<div class="abs" style="left:3338px;top:183px;width:34px;height:1333px;background:#fafafa"></div>
<svg class="i" style="left:3342.4px;top:203.4px" width="36.0" height="28.0" viewBox="0 0 36.0 28.0" ><path d="M18 4Q19.8 4 21 5.6L31 19.6Q32.8 24.8 28.6 24.8H7.4Q3.2 24.8 5 19.6L15 5.6Q16.2 4 18 4Z" fill="#8a8a8a"/></svg>
<div class="abs" style="left:3347px;top:252px;width:27px;height:1092px;border-radius:13.5px;background:#8a8a8a"></div>
<svg class="i" style="left:3342.4px;top:1470.4px" width="36.0" height="28.0" viewBox="0 0 36.0 28.0" ><path d="M18 24.8Q19.8 24.8 21 23.2L31 9.2Q32.8 4 28.6 4H7.4Q3.2 4 5 9.2L15 23.2Q16.2 24.8 18 24.8Z" fill="#8a8a8a"/></svg>
</body></html>
